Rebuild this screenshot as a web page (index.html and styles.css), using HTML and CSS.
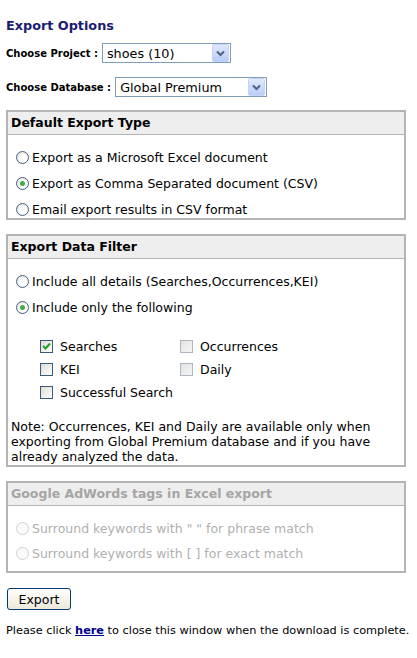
FILE: index.html
```html
<!DOCTYPE html>
<html>
<head>
<meta charset="utf-8">
<link rel="stylesheet" href="styles.css">
</head>
<body>
<h1 class="title">Export Options</h1>
<div class="field">
  <span class="label">Choose Project :</span>
  <div class="select sel-project"><span class="sel-text">shoes (10)</span><span class="sel-btn"><svg width="9" height="7" viewBox="0 0 9 7"><path d="M1 1.5 L4.5 5 L8 1.5" fill="none" stroke="#4d6185" stroke-width="2"/></svg></span></div>
</div>
<div class="field field-last">
  <span class="label">Choose Database :</span>
  <div class="select sel-db"><span class="sel-text">Global Premium</span><span class="sel-btn"><svg width="9" height="7" viewBox="0 0 9 7"><path d="M1 1.5 L4.5 5 L8 1.5" fill="none" stroke="#4d6185" stroke-width="2"/></svg></span></div>
</div>

<div class="box box-type">
  <div class="box-head">Default Export Type</div>
  <div class="box-body">
    <div class="opt"><span class="radio"></span>Export as a Microsoft Excel document</div>
    <div class="opt"><span class="radio checked"></span>Export as Comma Separated document (CSV)</div>
    <div class="opt"><span class="radio"></span>Email export results in CSV format</div>
  </div>
</div>

<div class="box box-filter">
  <div class="box-head">Export Data Filter</div>
  <div class="box-body">
    <div class="opt"><span class="radio"></span>Include all details (Searches,Occurrences,KEI)</div>
    <div class="opt"><span class="radio checked"></span>Include only the following</div>
    <div class="checks">
      <div class="chk"><span class="cbox checked"><svg width="11" height="11" viewBox="0 0 11 11"><path d="M2 5 L4.5 7.5 L9 2.5" fill="none" stroke="#21a121" stroke-width="2"/></svg></span>Searches</div>
      <div class="chk"><span class="cbox disabled"></span>Occurrences</div>
      <div class="chk"><span class="cbox"></span>KEI</div>
      <div class="chk"><span class="cbox disabled"></span>Daily</div>
      <div class="chk"><span class="cbox"></span>Successful Search</div>
    </div>
    <p class="note">Note: Occurrences, KEI and Daily are available only when exporting from Global Premium database and if you have already analyzed the data.</p>
  </div>
</div>

<div class="box box-off">
  <div class="box-head">Google AdWords tags in Excel export</div>
  <div class="box-body">
    <div class="opt"><span class="radio dis"></span>Surround keywords with " " for phrase match</div>
    <div class="opt"><span class="radio dis"></span>Surround keywords with [ ] for exact match</div>
  </div>
</div>

<button class="btn">Export</button>
<p class="foot">Please click <a href="#" class="link">here</a> to close this window when the download is complete.</p>
</body>
</html>
```
FILE: styles.css
```css
html, body { margin: 0; padding: 0; background: #fff; }
body {
  font-family: "DejaVu Sans", Verdana, sans-serif;
  font-size: 12.5px;
  color: #000;
  padding: 0 6px;
  width: 405px;
}
.title {
  font-size: 12.8px;
  font-weight: bold;
  color: #1b1b71;
  margin: 18px 0 9px 0;
  line-height: 16px;
}
.field {
  display: flex;
  align-items: center;
  gap: 4px;
  height: 20px;
  margin-bottom: 14px;
}
.field-last { margin-bottom: 13px; }
.label {
  font-size: 10px;
  font-weight: bold;
}
.select {
  display: flex;
  align-items: center;
  justify-content: space-between;
  height: 18px;
  border: 1px solid #7f9db9;
  background: #fff;
  padding: 0 1px 0 4px;
  box-sizing: content-box;
}
.sel-project { width: 122px; }
.sel-db { width: 145px; }
.sel-text { font-size: 12.8px; }
.sel-btn {
  width: 15px;
  height: 16px;
  background: linear-gradient(#e0e9fc, #b9cdf6);
  border: 1px solid #c3d3fd;
  border-radius: 2px;
  display: flex;
  align-items: center;
  justify-content: center;
}
.box {
  border: 2px solid #b4b4b4;
  width: 396px;
  margin: 0 0 14px 0;
}
.box-head {
  background: #eeeeee;
  border-bottom: 1px solid #b4b4b4;
  font-weight: bold;
  font-size: 12.5px;
  height: 22px;
  line-height: 22px;
  padding-left: 3px;
}
.box-body {
  padding: 13px 0 0 8px;
  display: flex;
  flex-direction: column;
}
.box-type .box-body { gap: 8px; padding-bottom: 0; }
.box-filter .box-body { padding-bottom: 1px; }
.box-filter .opt + .opt { margin-top: 8px; }
.box-off .box-body { gap: 7px; padding-bottom: 9px; }
.opt {
  display: flex;
  align-items: center;
  height: 18px;
}
.radio {
  width: 11px;
  height: 11px;
  border-radius: 50%;
  border: 1px solid #43618a;
  background: radial-gradient(circle at 60% 60%, #fff 30%, #d8d8d0 100%);
  margin-right: 3px;
  position: relative;
  flex: none;
}
.radio.checked::after {
  content: "";
  position: absolute;
  left: 3px; top: 3px;
  width: 5px; height: 5px;
  border-radius: 50%;
  background: #3fad3f;
}
.radio.dis { border-color: #cfcfcf; background: #fafafa; }
.checks {
  display: grid;
  grid-template-columns: 140px 140px;
  row-gap: 10px;
  padding: 24px 0 0 24px;
}
.chk {
  display: flex;
  align-items: center;
  height: 13px;
}
.cbox {
  width: 11px;
  height: 11px;
  border: 1px solid #40587a;
  background: linear-gradient(135deg, #dcdcd6, #fff);
  margin-right: 7px;
  display: flex;
  align-items: center;
  justify-content: center;
  flex: none;
}
.cbox.disabled { border-color: #aeb6c0; background: linear-gradient(135deg, #e2e2e2, #f6f6f6); }
.note {
  margin: 20px 0 0 -5px;
  line-height: 15px;
}
.box-off { color: #b0b0b0; }
.box-off .box-head { color: #a5a5a5; }
.btn {
  font-family: "DejaVu Sans", Verdana, sans-serif;
  font-size: 12.5px;
  color: #000;
  width: 64px;
  height: 22px;
  border: 1px solid #003c74;
  border-radius: 3px;
  background: linear-gradient(#ffffff, #ece9d8);
  padding: 0;
  margin: 15px 0 0 1px;
  display: block;
}
.foot {
  font-size: 11.3px;
  line-height: 14px;
  margin: 14px 0 0 0;
}
.link {
  color: #00008b;
  font-weight: bold;
  text-decoration: underline;
}
```
